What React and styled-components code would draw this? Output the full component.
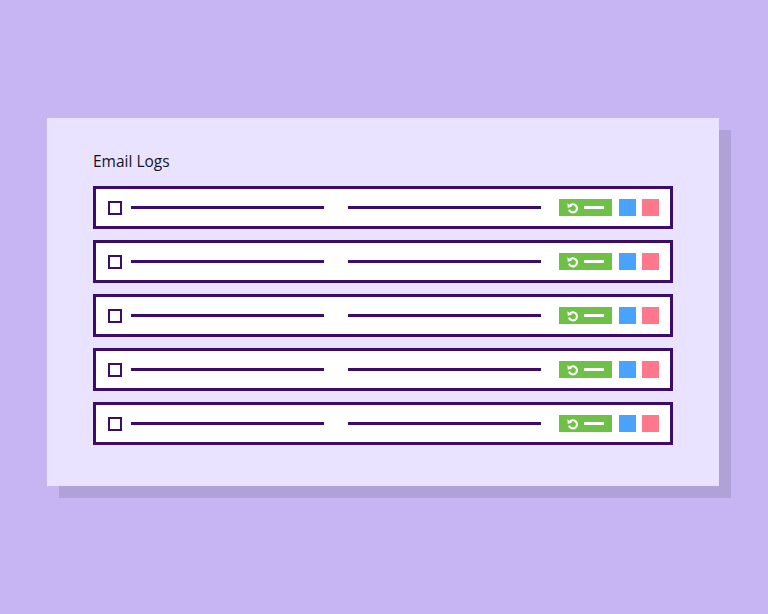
import React from 'react'
import styled, { createGlobalStyle } from 'styled-components'

const Global = createGlobalStyle`
  html, body {
    margin: 0;
    padding: 0;
    background: #c6b4f3;
  }
  body {
    font-family: "Open Sans", "Noto Sans", sans-serif;
  }
`;

const Page = styled.div`
  width: 768px;
  height: 614px;
  padding: 118px 0 0 47px;
  box-sizing: border-box;
`;

const Card = styled.div`
  width: 672px;
  height: 368px;
  box-sizing: border-box;
  padding: 32px 46px 0 46px;
  background: #e9e3ff;
  box-shadow: 12px 12px 0 #b1a1d9;
`;

const Title = styled.h2`
  margin: 0 0 14px 0;
  font-size: 15.5px;
  line-height: 22px;
  font-weight: 400;
  color: #15131f;
`;

const List = styled.div`
  display: flex;
  flex-direction: column;
  gap: 11px;
`;

const Row = styled.div`
  height: 43px;
  box-sizing: border-box;
  border: 3px solid #3d0b69;
  background: #ffffff;
  display: flex;
  align-items: center;
  padding: 0 10px 0 12px;
`;

const Check = styled.div`
  width: 14px;
  height: 14px;
  box-sizing: border-box;
  border: 2px solid #3d0b69;
  margin-right: 9px;
`;

const Line = styled.div`
  width: 193px;
  height: 3px;
  background: #3d0b69;
  margin-right: ${p => p.$gap}px;
`;

const Resend = styled.div`
  width: 53px;
  height: 17px;
  box-sizing: border-box;
  background: #6ec046;
  display: flex;
  align-items: center;
  padding: 0 8px;
  gap: 5px;
  margin-right: 7px;
`;

const Dash = styled.div`
  width: 21px;
  height: 3px;
  background: #ffffff;
`;

const Square = styled.div`
  width: 17px;
  height: 17px;
  background: ${p => p.$color};
  margin-left: ${p => p.$gap || 0}px;
`;

function RefreshIcon() {
  return (
    <svg width="12" height="12" viewBox="0 0 12 12" fill="none">
      <path d="M2.6 4 A4.2 4.2 0 1 1 2.1 7.6" stroke="#fff" strokeWidth="2.2" fill="none" />
      <path d="M0.4 1.2 L0.8 5.8 L5.2 4.6 Z" fill="#fff" />
    </svg>
  )
}

export default function App() {
  const rows = [0, 1, 2, 3, 4];
  return (
    <Page>
      <Global />
      <Card>
        <Title>Email Logs</Title>
        <List>
          {rows.map(i => (
            <Row key={i}>
              <Check />
              <Line $gap={24} />
              <Line $gap={18} />
              <Resend>
                <RefreshIcon />
                <Dash />
              </Resend>
              <Square $color="#4aa3fb" />
              <Square $color="#ff778a" $gap={6} />
            </Row>
          ))}
        </List>
      </Card>
    </Page>
  )
}
